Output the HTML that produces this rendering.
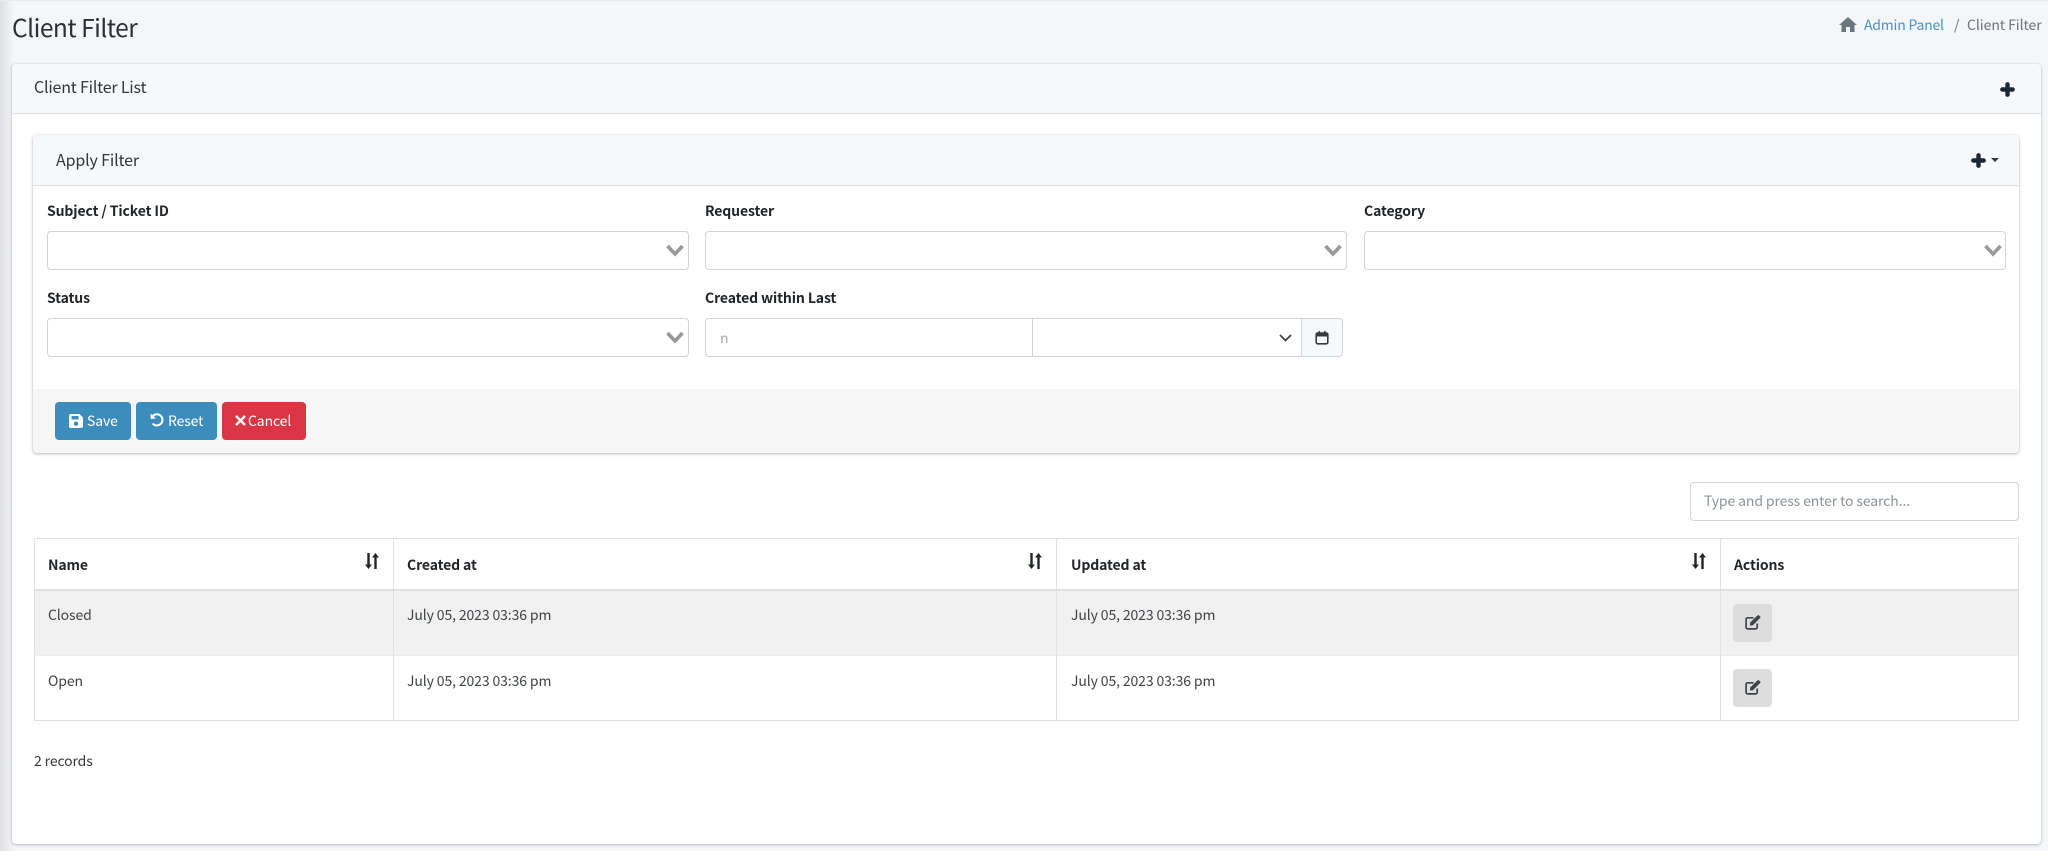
<!DOCTYPE html>
<html lang="en"><head><meta charset="utf-8"><title>Client Filter</title>
<style>
*{box-sizing:border-box}
html,body{margin:0;padding:0;width:2048px;height:851px;overflow:hidden;background:#f4f6f9}
body{position:relative;font-family:"Noto Sans CJK SC","Liberation Sans",sans-serif;color:#212529;font-size:14px;letter-spacing:-.12px}
.a{position:absolute}
.t{position:absolute;white-space:nowrap;line-height:20px;height:20px}
.b{font-weight:700;font-size:14px}
.d{font-size:14px;color:#3f444a}
.sel{position:absolute;height:39px;width:642px;background:#fff;border:1px solid #ced4da;border-radius:4px}
svg{position:absolute;display:block}
.btn{position:absolute;top:402px;height:38px;border-radius:4px;background:#3c8dbc}
.edit{position:absolute;left:1733px;width:39px;height:38px;background:#ddd;border-radius:4px}
</style></head><body>
<div class="a" style="left:0;top:0;width:14px;height:851px;background:linear-gradient(90deg,#dfe0e3,#f4f6f9)"></div>
<div class="a" style="left:0;top:0;width:2048px;height:1px;background:#e9ebee"></div>

<div class="t" style="left:12px;top:10px;height:36px;line-height:36px;font-size:24.5px;letter-spacing:-.5px;color:#2b3036">Client Filter</div>
<svg style="left:1839px;top:17px" width="18" height="15" viewBox="0 0 18 15"><path fill="#6c757d" d="M9 0L18 8H15.500V15H11V10H7V15H2.500V8H0Z"/></svg>
<div class="t" style="left:1864px;top:15px;color:#4b94c4;font-size:14px;letter-spacing:-.2px">Admin Panel</div>
<div class="t" style="left:1954px;top:15px;color:#6c757d;font-size:14px">/</div>
<div class="t" style="left:1967px;top:15px;color:#6c757d;font-size:14px;letter-spacing:-.05px">Client Filter</div>

<!-- outer card -->
<div class="a" style="left:12px;top:64px;width:2029px;height:780px;background:#fff;border-radius:4px;box-shadow:0 0 1px rgba(0,0,0,.2),0 1px 3px rgba(0,0,0,.22)"></div>
<div class="a" style="left:12px;top:64px;width:2029px;height:50px;background:#f7f8fa;border-bottom:1px solid #dfe1e3;border-radius:4px 4px 0 0"></div>
<div class="t" style="left:34px;top:75px;font-size:16px;line-height:22px;height:22px;color:#32373c;letter-spacing:-.2px">Client Filter List</div>
<svg style="left:2000px;top:82px" width="15" height="15" viewBox="0 0 15 15"><path fill="none" stroke="#1c2738" stroke-width="4.400" stroke-linecap="round" d="M7.500 2.300V12.700M2.300 7.500H12.700"/></svg>

<!-- inner card -->
<div class="a" style="left:33px;top:135px;width:1986px;height:318px;background:#fff;border-radius:4px;box-shadow:0 0 1px rgba(0,0,0,.2),0 1px 3px rgba(0,0,0,.25)"></div>
<div class="a" style="left:33px;top:135px;width:1986px;height:51px;background:#f7f8fa;border-bottom:1px solid #dfe1e3;border-radius:4px 4px 0 0"></div>
<div class="t" style="left:56px;top:148px;font-size:16px;line-height:22px;height:22px;color:#32373c;letter-spacing:-.15px">Apply Filter</div>
<svg style="left:1971px;top:153px" width="15" height="15" viewBox="0 0 15 15"><path fill="none" stroke="#1c2738" stroke-width="4.400" stroke-linecap="round" d="M7.500 2.300V12.700M2.300 7.500H12.700"/></svg>
<svg style="left:1991px;top:158px" width="8" height="4" viewBox="0 0 8 4"><path fill="#343a40" d="M0 0h8L4 4z"/></svg>

<div class="t b" style="left:47px;top:201px">Subject / Ticket ID</div>
<div class="t b" style="left:705px;top:201px">Requester</div>
<div class="t b" style="left:1364px;top:201px">Category</div>
<div class="sel" style="left:47px;top:231px"></div>
<div class="sel" style="left:705px;top:231px"></div>
<div class="sel" style="left:1364px;top:231px"></div>
<svg style="left:666px;top:244px" width="18" height="13" viewBox="0 0 18 13"><path fill="none" stroke="#999" stroke-width="3.600" d="M1.500 2l7.500 8 7.500-8"/></svg>
<svg style="left:1324px;top:244px" width="18" height="13" viewBox="0 0 18 13"><path fill="none" stroke="#999" stroke-width="3.600" d="M1.500 2l7.500 8 7.500-8"/></svg>
<svg style="left:1984px;top:244px" width="18" height="13" viewBox="0 0 18 13"><path fill="none" stroke="#999" stroke-width="3.600" d="M1.500 2l7.500 8 7.500-8"/></svg>

<div class="t b" style="left:47px;top:288px">Status</div>
<div class="t b" style="left:705px;top:288px">Created within Last</div>
<div class="sel" style="left:47px;top:318px"></div>
<svg style="left:666px;top:331px" width="18" height="13" viewBox="0 0 18 13"><path fill="none" stroke="#999" stroke-width="3.600" d="M1.500 2l7.500 8 7.500-8"/></svg>

<div class="a" style="left:705px;top:318px;width:638px;height:39px;background:#fff;border:1px solid #ced4da;border-radius:4px"></div>
<div class="a" style="left:1032px;top:318px;width:1px;height:39px;background:#ced4da"></div>
<div class="a" style="left:1301px;top:319px;width:41px;height:37px;background:#f7f8fa;border-left:1px solid #ced4da;border-radius:0 3px 3px 0"></div>
<div class="t" style="left:720px;top:328px;color:#a5abb1;font-size:14px">n</div>
<svg style="left:1279px;top:334px" width="13" height="8" viewBox="0 0 13 8"><path fill="none" stroke="#3f444a" stroke-width="1.800" d="M1 1l5.500 5.500L12 1"/></svg>
<svg style="left:1315px;top:330px" width="14" height="15" viewBox="0 0 14 15"><rect x="1.200" y="3" width="11.600" height="10.800" rx="1.500" fill="none" stroke="#343a40" stroke-width="1.600"/><rect x="1" y="3" width="12" height="3.500" fill="#343a40"/><rect x="3.500" y="1" width="1.600" height="3" fill="#343a40"/><rect x="9" y="1" width="1.600" height="3" fill="#343a40"/></svg>

<!-- footer -->
<div class="a" style="left:33px;top:389px;width:1986px;height:64px;background:#f6f6f6;border-radius:0 0 4px 4px"></div>
<div class="btn" style="left:55px;width:76px"></div>
<svg style="left:69px;top:414px" width="14" height="14" viewBox="0 0 14 14"><path fill="#fff" fill-rule="evenodd" d="M2 0h8.500L14 3.500V12a2 2 0 0 1-2 2H2a2 2 0 0 1-2-2V2a2 2 0 0 1 2-2zM2.500 2v3.500h7V2zM7 7.500a2.200 2.200 0 1 0 0 4.400 2.200 2.200 0 0 0 0-4.400z"/></svg>
<div class="t" style="left:87px;top:411px;color:#fff;font-size:14px">Save</div>
<div class="btn" style="left:136px;width:81px"></div>
<svg style="left:150px;top:413px" width="14" height="14" viewBox="0 0 14 14"><path fill="none" stroke="#fff" stroke-width="2" d="M3 2.800A5.600 5.600 0 1 1 2.600 10.500"/><path fill="#fff" d="M0.500 0.500L0.800 6 6 5.500z"/></svg>
<div class="t" style="left:168px;top:411px;color:#fff;font-size:14px">Reset</div>
<div class="btn" style="left:222px;width:84px;background:#dc3545"></div>
<svg style="left:235px;top:415px" width="11" height="11" viewBox="0 0 11 11"><path stroke="#fff" stroke-width="2.400" d="M1 1l9 9M10 1l-9 9"/></svg>
<div class="t" style="left:248px;top:411px;color:#fff;font-size:14px">Cancel</div>

<!-- search -->
<div class="a" style="left:1690px;top:482px;width:329px;height:39px;background:#fff;border:1px solid #ced4da;border-radius:4px"></div>
<div class="t" style="left:1704px;top:491px;color:#8c949b;font-size:14px">Type and press enter to search...</div>

<!-- table -->
<div class="a" style="left:34px;top:589px;width:1985px;height:67px;background:#f1f1f1"></div>
<div class="a" style="left:34px;top:538px;width:1985px;height:183px;border:1px solid #dee2e6"></div>
<div class="a" style="left:34px;top:589px;width:1985px;height:2px;background:#dee2e6"></div>
<div class="a" style="left:34px;top:655px;width:1985px;height:1px;background:#e9ebee"></div>
<div class="a" style="left:393px;top:538px;width:1px;height:183px;background:#dee2e6"></div>
<div class="a" style="left:1056px;top:538px;width:1px;height:183px;background:#dee2e6"></div>
<div class="a" style="left:1720px;top:538px;width:1px;height:183px;background:#dee2e6"></div>

<div class="t b" style="left:48px;top:555px">Name</div>
<div class="t b" style="left:407px;top:555px">Created at</div>
<div class="t b" style="left:1071px;top:555px">Updated at</div>
<div class="t b" style="left:1734px;top:555px">Actions</div>
<svg style="left:365px;top:553px" width="14" height="16" viewBox="0 0 14 16"><path fill="#212529" d="M2.300 0h2.400v11.500H7L3.500 16 0 11.500h2.300zM9.300 16h2.400V4.500H14L10.500 0 7 4.500h2.300z"/></svg>
<svg style="left:1028px;top:553px" width="14" height="16" viewBox="0 0 14 16"><path fill="#212529" d="M2.300 0h2.400v11.500H7L3.500 16 0 11.500h2.300zM9.300 16h2.400V4.500H14L10.500 0 7 4.500h2.300z"/></svg>
<svg style="left:1692px;top:553px" width="14" height="16" viewBox="0 0 14 16"><path fill="#212529" d="M2.300 0h2.400v11.500H7L3.500 16 0 11.500h2.300zM9.300 16h2.400V4.500H14L10.500 0 7 4.500h2.300z"/></svg>

<div class="t d" style="left:48px;top:605px">Closed</div>
<div class="t d" style="left:407px;top:605px">July 05, 2023 03:36 pm</div>
<div class="t d" style="left:1071px;top:605px">July 05, 2023 03:36 pm</div>
<div class="t d" style="left:48px;top:671px">Open</div>
<div class="t d" style="left:407px;top:671px">July 05, 2023 03:36 pm</div>
<div class="t d" style="left:1071px;top:671px">July 05, 2023 03:36 pm</div>

<div class="edit" style="top:604px"></div>
<svg style="left:1745px;top:615px" width="16" height="15" viewBox="0 0 16 15"><path fill="none" stroke="#3f444a" stroke-width="1.700" d="M8.500 2.800H2.600a1.500 1.500 0 0 0-1.500 1.500v8.100a1.500 1.500 0 0 0 1.500 1.500h8.100a1.500 1.500 0 0 0 1.500-1.500V8.500"/><path fill="#3f444a" d="M5.200 7.500L12 .9l2.600 2.600-6.700 6.700-3 .4zM12.800.2l.8-.2 2 2-.2.800-.8.700-2.500-2.500z"/></svg>
<div class="edit" style="top:669px"></div>
<svg style="left:1745px;top:680px" width="16" height="15" viewBox="0 0 16 15"><path fill="none" stroke="#3f444a" stroke-width="1.700" d="M8.500 2.800H2.600a1.500 1.500 0 0 0-1.500 1.500v8.100a1.500 1.500 0 0 0 1.500 1.500h8.100a1.500 1.500 0 0 0 1.500-1.500V8.500"/><path fill="#3f444a" d="M5.200 7.500L12 .9l2.600 2.600-6.700 6.700-3 .4zM12.800.2l.8-.2 2 2-.2.800-.8.700-2.500-2.500z"/></svg>

<div class="t" style="left:34px;top:751px;font-size:14px;color:#343a40">2 records</div>
</body></html>
